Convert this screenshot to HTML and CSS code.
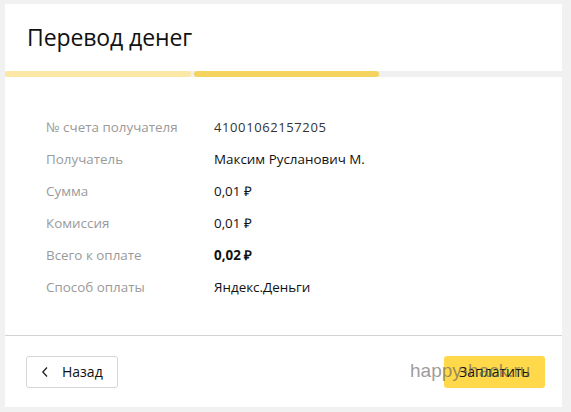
FILE: index.html
```html
<!DOCTYPE html>
<html lang="ru">
<head>
<meta charset="utf-8">
<title>Перевод денег</title>
<link rel="stylesheet" href="styles.css">
</head>
<body>
<div class="card">
  <div class="header">
    <h1 class="title">Перевод денег</h1>
  </div>
  <div class="progress">
    <div class="seg seg-done"></div>
    <div class="seg seg-active"></div>
    <div class="seg seg-rest"></div>
  </div>
  <div class="content">
    <div class="row"><div class="label">№ счета получателя</div><div class="value value-acc">41001062157205</div></div>
    <div class="row"><div class="label">Получатель</div><div class="value">Максим Русланович М.</div></div>
    <div class="row"><div class="label">Сумма</div><div class="value">0,01 ₽</div></div>
    <div class="row"><div class="label">Комиссия</div><div class="value">0,01 ₽</div></div>
    <div class="row"><div class="label">Всего к оплате</div><div class="value value-bold">0,02 ₽</div></div>
    <div class="row"><div class="label">Способ оплаты</div><div class="value">Яндекс.Деньги</div></div>
  </div>
  <div class="footer">
    <button class="btn btn-back">
      <svg class="chev" width="8" height="12" viewBox="0 0 8 12"><path d="M6 1.5 L1.8 6 L6 10.5" fill="none" stroke="#222" stroke-width="1.3"/></svg>
      <span>Назад</span>
    </button>
    <button class="btn btn-pay">Заплатить</button>
    <div class="watermark">happy-hack.ru</div>
  </div>
</div>
</body>
</html>
```
FILE: styles.css
```css
html, body {
  margin: 0;
  padding: 0;
}
body {
  background: #f1f1f1;
  font-family: "Open Sans", "Liberation Sans", sans-serif;
  width: 571px;
  height: 412px;
  overflow: hidden;
}
.card {
  margin: 4px 9px 0 5px;
  width: 557px;
  display: flex;
  flex-direction: column;
  position: relative;
}
.header {
  background: #fff;
  height: 67px;
  display: flex;
  align-items: center;
  padding-left: 22px;
}
.title {
  margin: 0;
  font-weight: 400;
  font-size: 23px;
  color: #111;
  letter-spacing: -0.1px;
  padding-bottom: 2px;
}
.progress {
  display: flex;
  height: 6px;
  background: #f0f0f0;
  gap: 3px;
}
.seg {
  height: 6px;
  border-radius: 3px;
}
.seg-done {
  width: 186px;
  background: #fbe8a6;
}
.seg-active {
  width: 185px;
  background: #f4d35e;
}
.seg-rest {
  flex: 1;
  background: #f0f0f0;
}
.content {
  background: #fff;
  height: 259px;
  box-sizing: border-box;
  padding: 34px 0 0 41px;
  border-bottom: 1px solid #d2d2d2;
}
.row {
  display: flex;
  height: 32px;
  align-items: center;
  font-size: 13.4px;
}
.label {
  width: 168px;
  color: #9a9a9a;
}
.value {
  color: #111;
}
.value-acc {
  font-size: 13px;
  letter-spacing: 0.6px;
  color: #333;
  transform: scaleY(0.9);
}
.value-bold {
  font-weight: 700;
}
.footer {
  background: #fff;
  height: 71px;
  display: flex;
  align-items: center;
  justify-content: space-between;
  padding: 0 17px 0 21px;
  position: relative;
}
.btn {
  font-family: "Open Sans", "Liberation Sans", sans-serif;
  font-size: 14px;
  height: 32px;
  border-radius: 3px;
  cursor: pointer;
  display: flex;
  align-items: center;
  color: #111;
}
.btn-back {
  width: 92px;
  background: #fff;
  border: 1px solid #d6d6d6;
  padding: 0 0 0 14px;
  gap: 13px;
}
.btn-pay {
  width: 101px;
  background: #ffd94a;
  border: none;
  justify-content: center;
  padding: 0;
}
.watermark {
  position: absolute;
  left: 405px;
  top: 24px;
  font-family: "Liberation Sans", sans-serif;
  font-size: 19px;
  color: rgba(90, 90, 90, 0.62);
  pointer-events: none;
}
```
